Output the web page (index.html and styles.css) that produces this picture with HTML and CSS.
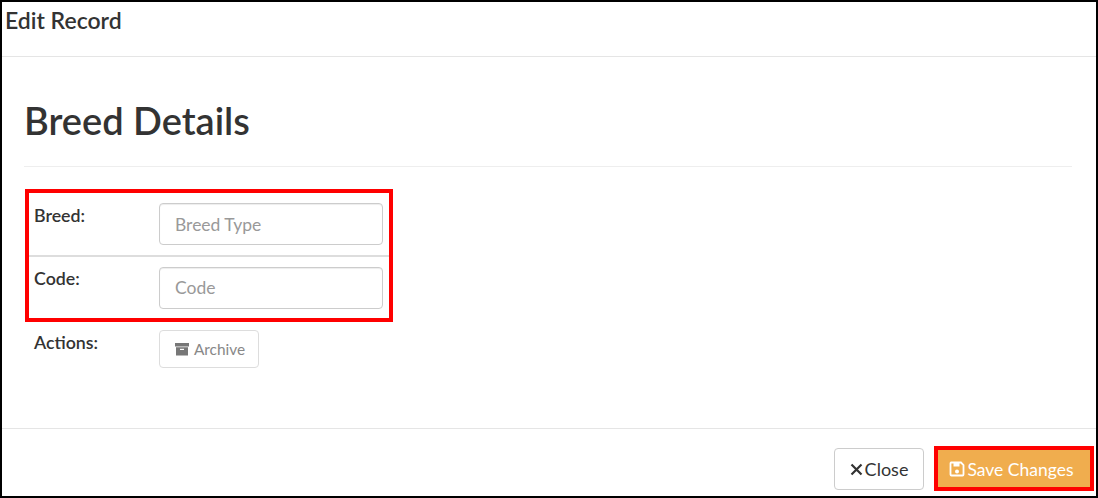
FILE: index.html
```html
<!DOCTYPE html>
<html lang="en">
<head>
  <meta charset="UTF-8" />
  <title>Edit Record</title>
  <link rel="stylesheet" href="styles.css">
</head>
<body>
  <div class="modal">
    <div class="modal-header">Edit Record</div>

    <div class="modal-body">
      <h1>Breed Details</h1>
      <hr>

      <div class="highlight">
        <div class="row row-first">
          <label>Breed:</label>
          <input type="text" placeholder="Breed Type" />
        </div>
        <div class="row row-second">
          <label>Code:</label>
          <input type="text" placeholder="Code" />
        </div>
      </div>

      <div class="row row-actions">
        <label>Actions:</label>
        <button class="btn-archive">
          <svg class="icon" width="14" height="14" viewBox="0 0 14 14"><path fill="#777" d="M0 1h14v3.500H0zM1 5.300h12V13.500H1z"/><path fill="#fff" d="M5 6.800h4V8H5z"/></svg>
          Archive
        </button>
      </div>
    </div>

    <div class="modal-footer">
      <button class="btn-close">
        <svg class="icon" width="13" height="13" viewBox="0 0 13 13"><path stroke="#333" stroke-width="2.200" d="M1.500 1.500l10 10M11.500 1.500l-10 10"/></svg>
        Close
      </button>
      <button class="btn-save">
        <svg class="icon" width="16" height="16" viewBox="0 0 16 16"><path fill="none" stroke="#fff" stroke-width="1.800" d="M2 1.500h10l2.500 2.500v9.500a1 1 0 0 1-1 1h-11a1 1 0 0 1-1-1v-11a1 1 0 0 1 .5-1z"/><path fill="#fff" d="M4.500 2h6v3.500h-6z"/><circle cx="8" cy="10.500" r="2" fill="#fff"/></svg>
        Save Changes
      </button>
    </div>
  </div>
</body>
</html>
```

FILE: styles.css
```css
html, body {
  margin: 0;
  padding: 0;
  background: #fff;
}

body {
  font-family: "Lato", sans-serif;
  color: #333;
}

.modal {
  box-sizing: border-box;
  width: 1098px;
  height: 498px;
  border: 2px solid #000;
  display: flex;
  flex-direction: column;
  background: #fff;
}

.modal-header {
  box-sizing: border-box;
  height: 55px;
  padding: 5px 0 0 3px;
  font-size: 23px;
  font-weight: 600;
  line-height: 27px;
  border-bottom: 1px solid #e5e5e5;
}

.modal-body {
  flex: 1;
  padding: 0 24px 0 22px;
}

h1 {
  margin: 36px 0 0;
  font-size: 38px;
  line-height: 54px;
  font-weight: 600;
  color: #333;
}

hr {
  margin: 19px 0 22px;
  border: 0;
  border-top: 1px solid #eee;
}

.highlight {
  box-sizing: border-box;
  width: 368px;
  height: 133px;
  margin-left: 1px;
  border: 4px solid #f00;
}

.row {
  display: flex;
  align-items: flex-start;
}

.row label {
  box-sizing: border-box;
  width: 130px;
  padding-left: 5px;
  padding-top: 1px;
  font-weight: 600;
  font-size: 17.8px;
  line-height: 22px;
  color: #333;
}

.row-first {
  box-sizing: border-box;
  height: 64px;
  padding-top: 10px;
  border-bottom: 2px solid #ddd;
}

.row-second {
  padding-top: 10px;
}

.row-second label {
  padding-top: 0;
}

.row-second input {
  padding-bottom: 2px;
}

.row-actions {
  margin-top: 8px;
  margin-left: 5px;
}

input {
  box-sizing: border-box;
  width: 224px;
  height: 42px;
  padding: 0 15px;
  border: 1px solid #ccc;
  border-radius: 4px;
  font-family: "Lato", sans-serif;
  font-size: 17.5px;
  box-shadow: inset 0 1px 1px rgba(0, 0, 0, 0.075);
}

input::placeholder {
  color: #999;
}

button {
  font-family: "Lato", sans-serif;
  display: inline-flex;
  align-items: center;
  justify-content: center;
  box-sizing: border-box;
  cursor: pointer;
}

.btn-archive {
  width: 100px;
  height: 38px;
  gap: 5px;
  padding: 0 0 0 2px;
  background: #fff;
  border: 1px solid #ddd;
  border-radius: 4px;
  color: #888;
  font-size: 15.4px;
}

.modal-footer {
  box-sizing: border-box;
  height: 68px;
  padding: 17px 2px 0 0;
  border-top: 1px solid #e5e5e5;
  display: flex;
  justify-content: flex-end;
  align-items: flex-start;
  gap: 10px;
}

.btn-close {
  width: 90px;
  height: 42px;
  margin-top: 2px;
  gap: 2px;
  padding-right: 6px;
  background: #fff;
  border: 1px solid #ccc;
  border-radius: 4px;
  color: #333;
  font-size: 18px;
}

.btn-save {
  width: 160px;
  height: 45px;
  gap: 2px;
  padding: 1px 5px 0 0;
  background: #f0ad4e;
  border: 4px solid #f00;
  color: #fff;
  font-size: 17.5px;
}
```
